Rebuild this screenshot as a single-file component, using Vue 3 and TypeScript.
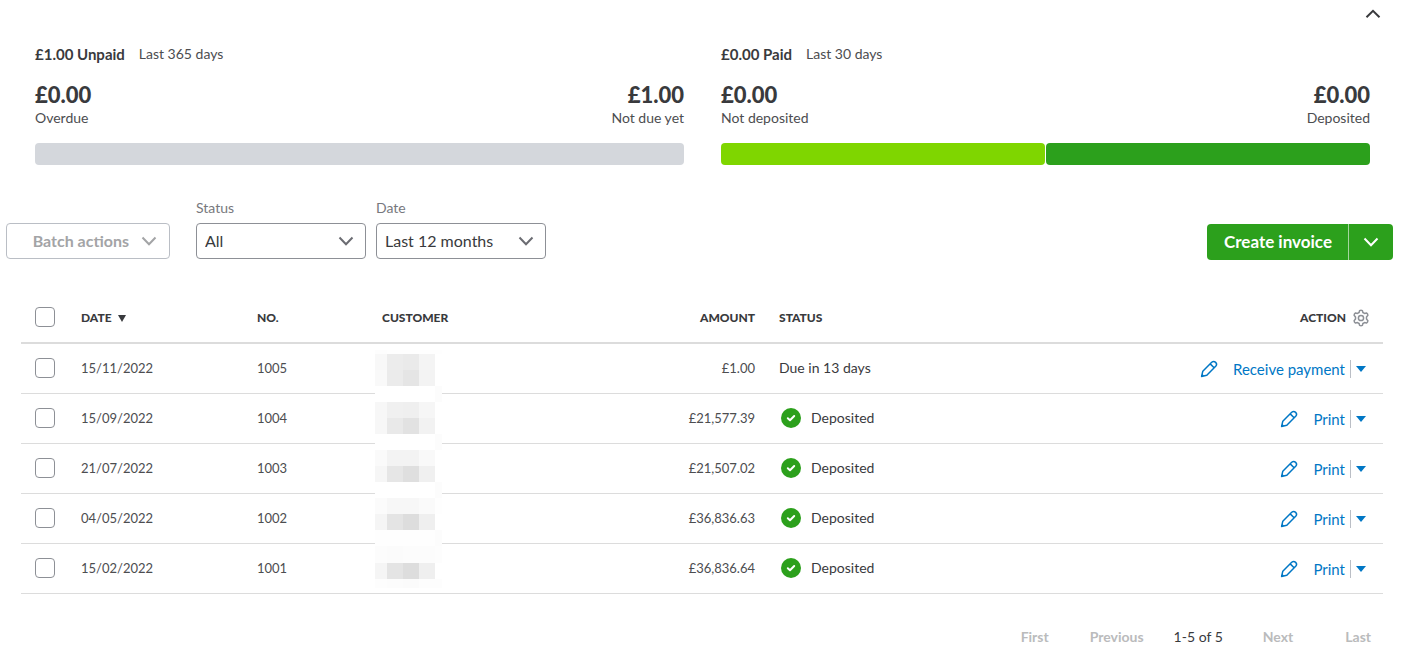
<script setup lang="ts">
import { computed, ref } from 'vue'

interface Invoice {
  date: string
  no: string
  amount: string
  status: string
  deposited: boolean
  action: string
}

const open = ref(true)
const status = ref('All')
const period = ref('Last 12 months')
const selected = ref<string[]>([])

const panels = [
  {
    total: '£1.00 Unpaid',
    range: 'Last 365 days',
    left: { value: '£0.00', label: 'Overdue' },
    right: { value: '£1.00', label: 'Not due yet' },
    bars: ['grey'],
  },
  {
    total: '£0.00 Paid',
    range: 'Last 30 days',
    left: { value: '£0.00', label: 'Not deposited' },
    right: { value: '£0.00', label: 'Deposited' },
    bars: ['lime', 'green'],
  },
]

const invoices: Invoice[] = [
  { date: '15/11/2022', no: '1005', amount: '£1.00', status: 'Due in 13 days', deposited: false, action: 'Receive payment' },
  { date: '15/09/2022', no: '1004', amount: '£21,577.39', status: 'Deposited', deposited: true, action: 'Print' },
  { date: '21/07/2022', no: '1003', amount: '£21,507.02', status: 'Deposited', deposited: true, action: 'Print' },
  { date: '04/05/2022', no: '1002', amount: '£36,836.63', status: 'Deposited', deposited: true, action: 'Print' },
  { date: '15/02/2022', no: '1001', amount: '£36,836.64', status: 'Deposited', deposited: true, action: 'Print' },
]

const allSelected = computed({
  get: () => selected.value.length === invoices.length,
  set: (on: boolean) => {
    selected.value = on ? invoices.map((i) => i.no) : []
  },
})

// Shades of the mosaic that hides the customer names, row by row.
const mosaic: string[][] = [
  ['#fdfdfd', '#fefefe', '#fefefe', '#fefefe', '#fefefe'],
  ['#f8f8f8', '#ececec', '#eaeaea', '#f4f4f4', '#ffffff'],
  ['#f9f9f9', '#ebebeb', '#e5e5e5', '#f3f3f3', '#ffffff'],
  ['#ffffff', '#ffffff', '#ffffff', '#ffffff', '#fcfcfc'],
  ['#f7f7f7', '#f0f0f0', '#efefef', '#f6f6f6', '#ffffff'],
  ['#f7f7f7', '#e9e9e9', '#e2e2e2', '#f2f2f2', '#ffffff'],
  ['#ffffff', '#ffffff', '#ffffff', '#ffffff', '#fcfcfc'],
  ['#fafafa', '#f3f3f3', '#f3f3f3', '#f9f9f9', '#ffffff'],
  ['#f6f6f6', '#e6e6e6', '#dfdfdf', '#f0f0f0', '#ffffff'],
  ['#ffffff', '#ffffff', '#ffffff', '#ffffff', '#fcfcfc'],
  ['#fbfbfb', '#f7f7f7', '#f7f7f7', '#fafafa', '#fefefe'],
  ['#f5f5f5', '#e4e4e4', '#dddddd', '#efefef', '#ffffff'],
  ['#fefefe', '#fefefe', '#fefefe', '#fefefe', '#fcfcfc'],
  ['#fcfcfc', '#fbfbfb', '#fcfcfc', '#fcfcfc', '#fdfdfd'],
  ['#f5f5f5', '#e4e4e4', '#dddddd', '#efefef', '#ffffff'],
  ['#fdfdfd', '#fcfcfc', '#fbfbfb', '#fdfdfd', '#fdfdfd'],
]
</script>

<template>
  <main class="page">
    <div class="top">
      <button class="collapse" type="button" aria-label="Toggle summary" :aria-expanded="open" @click="open = !open">
        <svg width="16" height="10" viewBox="0 0 16 10"><path d="M1.5 8.2 8 1.8l6.5 6.4" /></svg>
      </button>
    </div>

    <section v-if="open" class="summary">
      <article v-for="panel in panels" :key="panel.total" class="panel">
        <p class="heading"><strong>{{ panel.total }}</strong><span>{{ panel.range }}</span></p>
        <div class="figures">
          <div>
            <p class="value">{{ panel.left.value }}</p>
            <p class="caption">{{ panel.left.label }}</p>
          </div>
          <div class="end">
            <p class="value">{{ panel.right.value }}</p>
            <p class="caption">{{ panel.right.label }}</p>
          </div>
        </div>
        <div class="bars"><span v-for="bar in panel.bars" :key="bar" class="bar" :class="bar"></span></div>
      </article>
    </section>

    <section class="toolbar">
      <button class="batch" type="button" disabled>
        Batch actions
        <svg class="chevron" width="16" height="10" viewBox="0 0 16 10"><path d="M1.5 1.5 8 8.2l6.5-6.7" /></svg>
      </button>
      <div class="field">
        <label for="status">Status</label>
        <div class="select">
          <select id="status" v-model="status">
            <option>All</option>
            <option>Deposited</option>
          </select>
          <svg class="chevron" width="16" height="10" viewBox="0 0 16 10"><path d="M1.5 1.5 8 8.2l6.5-6.7" /></svg>
        </div>
      </div>
      <div class="field">
        <label for="period">Date</label>
        <div class="select">
          <select id="period" v-model="period">
            <option>Last 12 months</option>
            <option>Last 30 days</option>
          </select>
          <svg class="chevron" width="16" height="10" viewBox="0 0 16 10"><path d="M1.5 1.5 8 8.2l6.5-6.7" /></svg>
        </div>
      </div>
      <div class="create">
        <button class="create-main" type="button">Create invoice</button>
        <button class="create-more" type="button" aria-label="More create options">
          <svg class="chevron" width="16" height="10" viewBox="0 0 16 10"><path d="M1.5 1.5 8 8.2l6.5-6.7" /></svg>
        </button>
      </div>
    </section>

    <table class="invoices">
      <colgroup>
        <col class="c-check" />
        <col class="c-date" />
        <col class="c-no" />
        <col class="c-customer" />
        <col class="c-amount" />
        <col />
        <col class="c-action" />
      </colgroup>
      <thead>
        <tr>
          <th class="check"><input v-model="allSelected" type="checkbox" aria-label="Select all invoices" /></th>
          <th>
            <span class="sort">DATE<svg width="8" height="8" viewBox="0 0 8 8"><path d="M0 1h8L4 8z" /></svg></span>
          </th>
          <th>NO.</th>
          <th>CUSTOMER</th>
          <th class="num">AMOUNT</th>
          <th class="state">STATUS</th>
          <th>
            <div class="action-head">
              ACTION
              <button class="gear" type="button" aria-label="Table settings">
                <svg width="18" height="18" viewBox="0 0 18 18">
                  <path d="M7.6 1.6Q9 .9 10.400 1.600L10.900 3.500 12.500 4.400 14.500 3.900Q15.800 4.700 15.900 6.300L14.500 7.900V10.100L15.900 11.700Q15.800 13.300 14.500 14.100L12.500 13.600 10.900 14.500 10.400 16.400Q9 17.100 7.600 16.400L7.100 14.500 5.500 13.600 3.500 14.100Q2.200 13.300 2.100 11.700L3.500 10.100V7.900L2.100 6.300Q2.200 4.700 3.500 3.900L5.500 4.400 7.100 3.500Z" />
                  <circle cx="9" cy="9" r="2.6" />
                </svg>
              </button>
            </div>
          </th>
        </tr>
      </thead>
      <tbody>
        <tr v-for="(row, index) in invoices" :key="row.no">
          <td class="check">
            <input v-model="selected" type="checkbox" :value="row.no" :aria-label="'Select invoice ' + row.no" />
          </td>
          <td>{{ row.date }}</td>
          <td>{{ row.no }}</td>
          <td class="customer">
            <div v-if="index === 0" class="mosaic" aria-hidden="true">
              <template v-for="(line, y) in mosaic" :key="y">
                <i v-for="(shade, x) in line" :key="x" :style="{ background: shade }"></i>
              </template>
            </div>
          </td>
          <td class="num">{{ row.amount }}</td>
          <td class="state">
            <div class="status">
              <svg v-if="row.deposited" width="20" height="20" viewBox="0 0 20 20">
                <circle cx="10" cy="10" r="10" />
                <path d="M6.8 10.2 9 12.2 13.2 8" />
              </svg>
              {{ row.status }}
            </div>
          </td>
          <td>
            <div class="actions">
              <button class="edit" type="button" :aria-label="'Edit invoice ' + row.no">
                <svg width="18" height="18" viewBox="0 0 18 18">
                  <path d="M1.6 16.4 2.8 11.2 11.7 2.3Q13.7.6 15.600 2.400T15.700 6.300L6.800 15.200ZM10.200 3.900 14.100 7.800" />
                  <path class="tip" d="M1.600 16.400 2.200 13.800 4.200 15.800Z" />
                </svg>
              </button>
              <a href="#">{{ row.action }}</a>
              <button class="more" type="button" :aria-label="'More actions for invoice ' + row.no">
                <svg width="10" height="6" viewBox="0 0 10 6"><path d="M0 0h10L5 6z" /></svg>
              </button>
            </div>
          </td>
        </tr>
      </tbody>
    </table>

    <nav class="pager" aria-label="Pages">
      <button class="first" type="button" disabled>First</button>
      <button class="previous" type="button" disabled>Previous</button>
      <span>1-5 of 5</span>
      <button class="next" type="button" disabled>Next</button>
      <button class="last" type="button" disabled>Last</button>
    </nav>
  </main>
</template>

<style>
body {
  margin: 0;
  background: #fff;
}
</style>

<style scoped>
.page {
  box-sizing: border-box;
  font-family: Lato, 'Liberation Sans', sans-serif;
  font-size: 14px;
  line-height: 20px;
  color: #393a3d;
}
.page * {
  box-sizing: border-box;
}
p {
  margin: 0;
}
button {
  display: flex;
  align-items: center;
  padding: 0;
  border: 0;
  background: none;
  color: inherit;
  font: inherit;
  cursor: pointer;
}
button:disabled {
  cursor: default;
}
svg {
  display: block;
  flex: none;
}
.top {
  display: flex;
  justify-content: flex-end;
  height: 44px;
  padding: 9px 22px 0 0;
}
.collapse {
  height: 10px;
}
.collapse path,
.chevron path {
  fill: none;
  stroke: currentColor;
  stroke-width: 2;
}
.summary {
  display: grid;
  grid-template-columns: 1fr 1fr;
  gap: 37px;
  padding: 0 33px 0 35px;
}
.heading {
  display: flex;
  gap: 14px;
}
.heading strong {
  font-size: 15px;
}
.heading span,
.caption,
td {
  color: #4c4d50;
}
.figures {
  display: flex;
  justify-content: space-between;
  margin-top: 18px;
}
.end {
  text-align: right;
}
.value {
  font-size: 22px;
  line-height: 26px;
  font-weight: 900;
}
.bars {
  display: flex;
  gap: 1px;
  margin-top: 15px;
}
.bar {
  flex: 1;
  height: 22px;
  border-radius: 4px;
}
.grey {
  background: #d4d7dc;
}
.lime {
  background: #7fd600;
}
.green {
  background: #2ca01c;
}
.toolbar {
  display: flex;
  align-items: flex-end;
  gap: 10px;
  margin-top: 33px;
  padding: 0 10px 0 6px;
}
.batch {
  justify-content: flex-end;
  gap: 12px;
  width: 164px;
  height: 36px;
  margin-right: 16px;
  padding-right: 12px;
  border: 1px solid #babec5;
  border-radius: 4px;
  color: #a3a4a6;
  font-size: 16px;
  font-weight: 700;
}
.field label {
  display: block;
  margin-bottom: 5px;
  color: #77787d;
}
.select {
  position: relative;
  width: 170px;
}
.select select {
  display: block;
  width: 100%;
  height: 36px;
  padding: 0 36px 0 8px;
  appearance: none;
  border: 1px solid #8d9096;
  border-radius: 4px;
  background: #fff;
  color: #393a3d;
  font: inherit;
  font-size: 16px;
}
.select .chevron {
  position: absolute;
  top: 13px;
  right: 12px;
  color: #6b6c72;
  pointer-events: none;
}
.create {
  display: flex;
  height: 36px;
  margin: 0 0 -1px auto;
  border-radius: 4px;
  background: #2ca01c;
  color: #fff;
  font-size: 17px;
  font-weight: 700;
}
.create-main {
  padding: 0 16px 0 17px;
}
.create-more {
  justify-content: center;
  width: 45px;
  border-left: 1px solid #a5d69e;
}
.invoices {
  width: calc(100% - 41px);
  margin: 33px 20px 0 21px;
  table-layout: fixed;
  border-collapse: separate;
  border-spacing: 0;
  font-size: 13px;
}
.c-check {
  width: 50px;
}
.c-date {
  width: 176px;
}
.c-no {
  width: 125px;
}
.c-customer {
  width: 21%;
}
.c-amount {
  width: 107px;
}
.c-action {
  width: 300px;
}
th,
td {
  padding: 0 10px;
  text-align: left;
}
th {
  height: 52px;
  padding-top: 2px;
  border-bottom: 2px solid #dcdcdc;
  font-size: 12px;
  font-weight: 900;
}
td {
  height: 50px;
  padding-bottom: 1px;
  border-bottom: 1px solid #dcdcdc;
}
.check {
  padding: 0 14px 1px;
}
.check input {
  display: block;
  width: 20px;
  height: 20px;
  margin: 0;
  appearance: none;
  border: 1px solid #8d9096;
  border-radius: 4px;
  background: #fff;
}
.check input:checked {
  background: #2ca01c;
}
.num {
  text-align: right;
}
.state {
  padding-left: 14px;
}
.sort {
  display: flex;
  align-items: center;
  gap: 6px;
}
.sort path,
.more path {
  fill: currentColor;
}
.action-head {
  display: flex;
  align-items: center;
  justify-content: flex-end;
  gap: 6px;
  padding-right: 3px;
}
.gear svg {
  fill: none;
  stroke: #8d9096;
  stroke-width: 1.5;
  stroke-linejoin: round;
}
.customer {
  position: relative;
}
.mosaic {
  position: absolute;
  z-index: 1;
  top: 6px;
  left: 3px;
  display: grid;
  grid-template-columns: 12px 16px 16px 16px 7px;
  grid-template-rows: 4px repeat(12, 16px) 17px 16px 9px;
}
.status {
  display: flex;
  align-items: center;
  gap: 10px;
  color: #393a3d;
  font-size: 14px;
}
.status svg {
  margin-left: 2px;
}
.status circle {
  fill: #2ca01c;
}
.status path {
  fill: none;
  stroke: #fff;
  stroke-width: 2;
  stroke-linecap: round;
  stroke-linejoin: round;
}
.actions {
  display: flex;
  align-items: center;
  justify-content: flex-end;
  padding: 2px 7px 0 0;
  color: #0077c5;
  font-size: 15px;
}
.actions a {
  margin: 0 5px 0 15px;
  color: inherit;
  text-decoration: none;
}
.edit svg {
  fill: none;
  stroke: currentColor;
  stroke-width: 1.5;
  stroke-linejoin: round;
}
.edit .tip {
  fill: currentColor;
  stroke: none;
}
.more {
  height: 18px;
  padding-left: 5px;
  border-left: 1px solid #babec5;
}
.pager {
  display: flex;
  justify-content: flex-end;
  margin-top: 33px;
  padding-right: 32px;
}
.pager button {
  color: #babbbc;
  font-weight: 700;
}
.previous {
  margin: 0 30px 0 41px;
}
.next {
  margin: 0 52px 0 40px;
}
</style>
